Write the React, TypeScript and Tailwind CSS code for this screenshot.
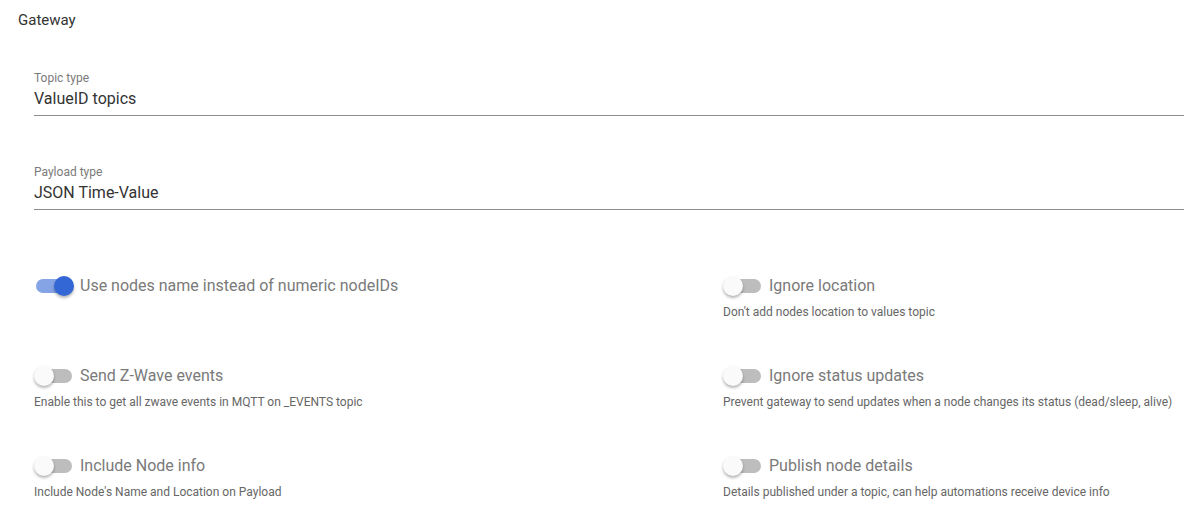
import React from "react";

type Toggle = { label: string; hint?: string; on?: boolean };

const left: Toggle[] = [
  { label: "Use nodes name instead of numeric nodeIDs", on: true },
  { label: "Send Z-Wave events", hint: "Enable this to get all zwave events in MQTT on _EVENTS topic" },
  { label: "Include Node info", hint: "Include Node's Name and Location on Payload" },
];

const right: Toggle[] = [
  { label: "Ignore location", hint: "Don't add nodes location to values topic" },
  { label: "Ignore status updates", hint: "Prevent gateway to send updates when a node changes its status (dead/sleep, alive)" },
  { label: "Publish node details", hint: "Details published under a topic, can help automations receive device info" },
];

const Field = ({ label, value }: { label: string; value: string }) => (
  <div className="flex flex-col">
    <div className="h-4 text-xs leading-4 text-[#7a7a7a]">{label}</div>
    <div className="h-[30px] border-b border-[#8c8c8c] pb-[5px] pt-[1px] text-base leading-6 text-[#333]">
      {value}
    </div>
  </div>
);

const Switch = ({ on }: { on?: boolean }) => (
  <div className="relative h-6 w-[46px] shrink-0">
    <div
      className={`absolute left-[2px] top-[5px] h-[14px] w-[36px] rounded-full ${
        on ? "bg-[#3367d6]/60" : "bg-[#bdbdbd]"
      }`}
    />
    <div
      className={`absolute top-[2px] h-5 w-5 rounded-full shadow-[0_2px_3px_rgba(0,0,0,0.3)] ${
        on ? "left-[20px] bg-[#3367d6]" : "left-0 bg-[#fafafa]"
      }`}
    />
  </div>
);

const ToggleRow = ({ item }: { item: Toggle }) => (
  <div className="h-[90px]">
    <div className="flex h-6 items-center">
      <Switch on={item.on} />
      <span className="text-base leading-6 text-[#7a7a7a]">{item.label}</span>
    </div>
    {item.hint && (
      <div className="mt-[6px] text-xs leading-4 text-[#666]">{item.hint}</div>
    )}
  </div>
);

export default function App() {
  return (
    <div className="h-[520px] w-[1184px] overflow-hidden bg-white font-['Roboto',sans-serif]">
      <div className="pl-[18px] pt-[10px] text-[15px] leading-5 text-[#333]">Gateway</div>
      <div className="pl-[34px]">
        <div className="mt-10 w-[1160px]">
          <Field label="Topic type" value="ValueID topics" />
        </div>
        <div className="mt-[48px] w-[1160px]">
          <Field label="Payload type" value="JSON Time-Value" />
        </div>
        <div className="mt-[64px] grid grid-cols-[689px_1fr]">
          <div className="flex flex-col">
            {left.map(t => (
              <ToggleRow key={t.label} item={t} />
            ))}
          </div>
          <div className="flex flex-col">
            {right.map(t => (
              <ToggleRow key={t.label} item={t} />
            ))}
          </div>
        </div>
      </div>
    </div>
  );
}
